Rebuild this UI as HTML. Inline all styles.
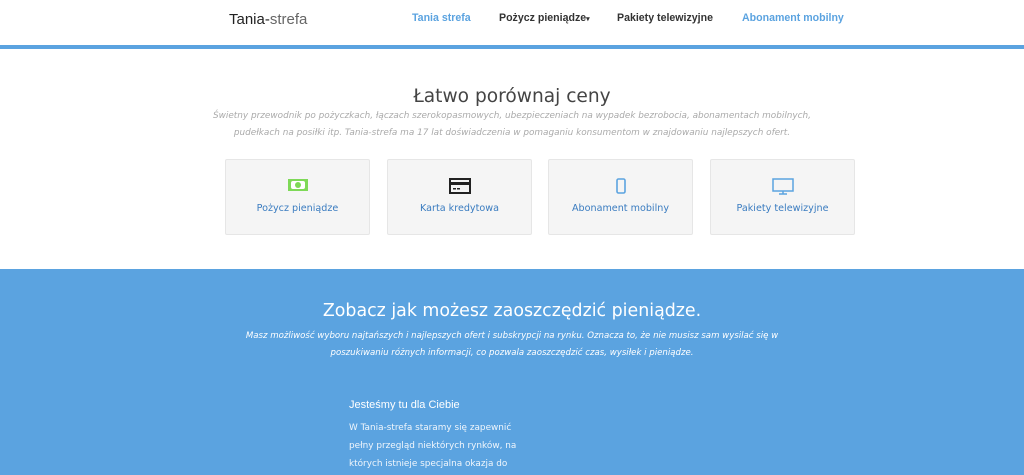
<!DOCTYPE html>
<html><head><meta charset="utf-8"><style>
*{margin:0;padding:0;box-sizing:border-box}
html,body{width:1024px;height:475px;overflow:hidden}
body{font-family:"DejaVu Sans","Liberation Sans",sans-serif;background:#fff;position:relative}
.nav{position:relative;border-bottom:4px solid #5ba3e0;height:49px}
.logo{position:absolute;left:229px;top:10px;font:15px "Liberation Sans",sans-serif;color:#222}
.logo span{color:#666}
.nav a{position:absolute;top:12px;font:bold 10.6px "Liberation Sans",sans-serif;text-decoration:none;color:#333}
.hero{text-align:center;padding-top:37px;height:219px}
h1{font-weight:normal;font-size:18.6px;color:#444;margin-bottom:1px}
.sub{font-style:italic;font-size:8.9px;color:#aaa;line-height:17px;width:600px;margin:0 auto}
.cards{position:absolute;top:159px;left:225px}
.card{position:absolute;width:145px;height:76px;background:#f5f5f5;border:1px solid #e6e6e6;border-radius:2px;text-align:center;color:#3a7cc0;font-size:9.6px}
.card .ic{position:absolute;top:18px}
.card .t{position:absolute;top:43px;width:100%}
.blue{position:absolute;top:269px;left:0;width:1024px;height:206px;background:#5ba3e0;color:#fff;text-align:center}
.blue h2{font-weight:normal;font-size:17.4px;margin-top:32px}
.blue .s{font-style:italic;font-size:8.6px;line-height:17px;width:540px;margin:7px auto 0}
.col{position:absolute;left:349px;top:130px;text-align:left;width:175px}
.col h4{font:11px "Liberation Sans",sans-serif;margin-bottom:8px}
.col p{font-size:8.9px;line-height:18px;color:#f0f6fc}
</style></head><body>
<div class="nav">
<div class="logo" style="top:11px">Tania-<span>strefa</span></div>
<a style="left:412px;color:#5ba3e0">Tania strefa</a>
<a style="left:499px">Pożycz pieniądze<small style="font-size:7px">▾</small></a>
<a style="left:617px">Pakiety telewizyjne</a>
<a style="left:742px;color:#5ba3e0">Abonament mobilny</a>
</div>
<div class="hero">
<h1>Łatwo porównaj ceny</h1>
<div class="sub">Świetny przewodnik po pożyczkach, łączach szerokopasmowych, ubezpieczeniach na wypadek bezrobocia, abonamentach mobilnych, pudełkach na posiłki itp. Tania-strefa ma 17 lat doświadczenia w pomaganiu konsumentom w znajdowaniu najlepszych ofert.</div>
</div>
<div class="cards">
<div class="card" style="left:0"><svg class="ic" style="left:62px" width="20" height="14"><rect x="0" y="1" width="20" height="12" fill="#7ed957"/><rect x="3" y="3" width="14" height="8" rx="2" fill="#fff"/><circle cx="10" cy="7" r="3" fill="#7ed957"/></svg><div class="t">Pożycz pieniądze</div></div>
<div class="card" style="left:162px"><svg class="ic" style="left:61px" width="22" height="16"><rect x="1" y="1" width="20" height="14" fill="none" stroke="#222" stroke-width="2"/><rect x="1" y="4" width="20" height="3" fill="#222"/><rect x="4" y="10" width="3" height="1.5" fill="#222"/><rect x="8" y="10" width="3" height="1.5" fill="#222"/></svg><div class="t">Karta kredytowa</div></div>
<div class="card" style="left:323px"><svg class="ic" style="left:67px" width="10" height="16"><rect x="1" y="1" width="8" height="14" rx="1.5" fill="none" stroke="#5ba3e0" stroke-width="1.6"/></svg><div class="t">Abonament mobilny</div></div>
<div class="card" style="left:485px"><svg class="ic" style="left:61px" width="22" height="17"><rect x="1" y="1" width="20" height="12" fill="none" stroke="#5ba3e0" stroke-width="1.5"/><path d="M11 13v3M7 16h8" stroke="#5ba3e0" stroke-width="1.5"/></svg><div class="t">Pakiety telewizyjne</div></div>
</div>
<div class="blue">
<h2>Zobacz jak możesz zaoszczędzić pieniądze.</h2>
<div class="s">Masz możliwość wyboru najtańszych i najlepszych ofert i subskrypcji na rynku. Oznacza to, że nie musisz sam wysilać się w poszukiwaniu różnych informacji, co pozwala zaoszczędzić czas, wysiłek i pieniądze.</div>
<div class="col"><h4>Jesteśmy tu dla Ciebie</h4><p>W Tania-strefa staramy się zapewnić pełny przegląd niektórych rynków, na których istnieje specjalna okazja do zaoszczędzenia pieniędzy dla</p></div>
</div>
</body></html>
